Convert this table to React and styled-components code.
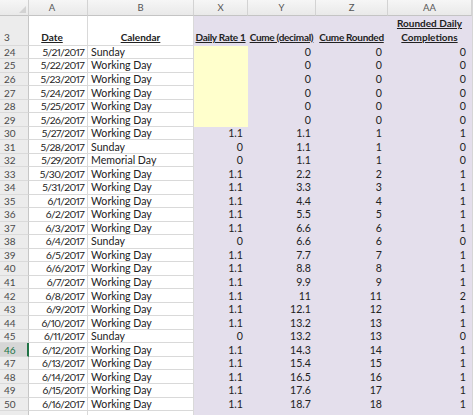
import React from 'react';
import styled, { createGlobalStyle } from 'styled-components';

const GlobalStyle = createGlobalStyle`
    html, body {
        margin: 0;
        padding: 0;
        background: #ffffff;
        overflow: hidden;
    }
    #root {
        width: 474px;
        height: 415px;
        overflow: hidden;
    }
`;

const colors = {
    white: '#ffffff',
    lavender: '#e4dfec',
    yellow: '#ffffcc',
    grid: '#d9d9d9',
    text: '#222222'
};

const columns = ['A', 'B', 'X', 'Y', 'Z', 'AA'];

// row, date, calendar, daily rate, cume decimal, cume rounded, rounded daily
const rows = [
    [24, '5/21/2017', 'Sunday', null, '0', '0', '0'],
    [25, '5/22/2017', 'Working Day', null, '0', '0', '0'],
    [26, '5/23/2017', 'Working Day', null, '0', '0', '0'],
    [27, '5/24/2017', 'Working Day', null, '0', '0', '0'],
    [28, '5/25/2017', 'Working Day', null, '0', '0', '0'],
    [29, '5/26/2017', 'Working Day', null, '0', '0', '0'],
    [30, '5/27/2017', 'Working Day', '1.1', '1.1', '1', '1'],
    [31, '5/28/2017', 'Sunday', '0', '1.1', '1', '0'],
    [32, '5/29/2017', 'Memorial Day', '0', '1.1', '1', '0'],
    [33, '5/30/2017', 'Working Day', '1.1', '2.2', '2', '1'],
    [34, '5/31/2017', 'Working Day', '1.1', '3.3', '3', '1'],
    [35, '6/1/2017', 'Working Day', '1.1', '4.4', '4', '1'],
    [36, '6/2/2017', 'Working Day', '1.1', '5.5', '5', '1'],
    [37, '6/3/2017', 'Working Day', '1.1', '6.6', '6', '1'],
    [38, '6/4/2017', 'Sunday', '0', '6.6', '6', '0'],
    [39, '6/5/2017', 'Working Day', '1.1', '7.7', '7', '1'],
    [40, '6/6/2017', 'Working Day', '1.1', '8.8', '8', '1'],
    [41, '6/7/2017', 'Working Day', '1.1', '9.9', '9', '1'],
    [42, '6/8/2017', 'Working Day', '1.1', '11', '11', '2'],
    [43, '6/9/2017', 'Working Day', '1.1', '12.1', '12', '1'],
    [44, '6/10/2017', 'Working Day', '1.1', '13.2', '13', '1'],
    [45, '6/11/2017', 'Sunday', '0', '13.2', '13', '0'],
    [46, '6/12/2017', 'Working Day', '1.1', '14.3', '14', '1'],
    [47, '6/13/2017', 'Working Day', '1.1', '15.4', '15', '1'],
    [48, '6/14/2017', 'Working Day', '1.1', '16.5', '16', '1'],
    [49, '6/15/2017', 'Working Day', '1.1', '17.6', '17', '1'],
    [50, '6/16/2017', 'Working Day', '1.1', '18.7', '18', '1'],
    [51, '', '', '', '', '', '']
];

const Sheet = styled.div`
    display: grid;
    grid-template-columns: 29px 59px 106px 54px 68px 72px 84px 2px;
    grid-template-rows: 15.5px 30.2px repeat(28, 13.54px);
    font-family: Lato, "Open Sans", sans-serif;
    font-size: 10.6px;
    color: ${colors.text};
`;

const Corner = styled.div`
    position: relative;
    background: linear-gradient(#f6f6f6, #e9e9e9);
    border-right: 1px solid #cfcfcf;
    border-bottom: 1px solid #c4c4c4;
    box-sizing: border-box;

    &::after {
        content: '';
        position: absolute;
        right: 2px;
        bottom: 2px;
        width: 0;
        height: 0;
        border-left: 7px solid transparent;
        border-bottom: 7px solid #d2d2d2;
    }
`;

const ColLetter = styled.div`
    display: flex;
    align-items: center;
    justify-content: center;
    background: linear-gradient(#f6f6f6, #e9e9e9);
    border-right: 1px solid #d3d3d3;
    border-bottom: 1px solid #c4c4c4;
    box-sizing: border-box;
    color: #555555;
    font-size: 9.5px;
    padding-right: ${props => props.$shift || 0}px;
`;

const RightEdge = styled.div`
    background: #ffffff;
    border-left: 1px solid #d6d6d6;
    box-sizing: border-box;
`;

const RowNum = styled.div`
    display: flex;
    align-items: ${props => props.$bottom ? 'flex-end' : 'center'};
    padding-left: 4px;
    padding-bottom: ${props => props.$bottom ? '2px' : '0'};
    background: ${props => props.$selected ? '#d6d6d6' : '#ececec'};
    color: ${props => props.$selected ? '#217346' : '#4a4a4a'};
    border-bottom: 1px solid #dadada;
    border-right: ${props => props.$selected ? '2px solid #217346' : '1px solid #c6c6c6'};
    box-sizing: border-box;
    font-size: 10px;
`;

const Cell = styled.div`
    display: flex;
    align-items: center;
    justify-content: ${props => props.$align === 'left' ? 'flex-start' : 'flex-end'};
    padding: 0 ${props => props.$pad || 3}px 0 3px;
    background: ${props => colors[props.$fill]};
    border-right: 1px solid ${props => props.$fill === 'white' ? colors.grid : colors[props.$fill]};
    border-bottom: 1px solid ${props => props.$fill === 'white' ? colors.grid : colors[props.$fill]};
    box-sizing: border-box;
    white-space: nowrap;
    overflow: hidden;
`;

const DateCell = styled(Cell)`
    font-size: 10.3px;
    letter-spacing: -0.6px;
    font-variant-numeric: proportional-nums;
`;

const HeadCell = styled.div`
    display: flex;
    align-items: flex-end;
    justify-content: center;
    padding: 0 ${props => props.$shift || 0}px 1px 0;
    background: ${props => colors[props.$fill]};
    border-right: 1px solid ${props => props.$fill === 'white' ? colors.grid : colors[props.$fill]};
    border-bottom: 1px solid ${props => props.$fill === 'white' ? colors.grid : colors[props.$fill]};
    box-sizing: border-box;
`;

const HeadLabel = styled.span`
    font-weight: bold;
    text-decoration: underline;
    text-align: center;
    line-height: 14px;
    font-size: 10px;
    white-space: pre;
    letter-spacing: ${props => props.$tight ? '-0.3px' : '0'};
`;

function HeaderRow() {
    return (
        <>
            <RowNum $bottom>3</RowNum>
            <HeadCell $fill="white" $shift={12}><HeadLabel>Date</HeadLabel></HeadCell>
            <HeadCell $fill="white"><HeadLabel>Calendar</HeadLabel></HeadCell>
            <HeadCell $fill="lavender"><HeadLabel $tight>Daily Rate 1</HeadLabel></HeadCell>
            <HeadCell $fill="lavender"><HeadLabel $tight>Cume (decimal)</HeadLabel></HeadCell>
            <HeadCell $fill="lavender"><HeadLabel $tight>Cume Rounded</HeadLabel></HeadCell>
            <HeadCell $fill="lavender"><HeadLabel>{'Rounded Daily\nCompletions'}</HeadLabel></HeadCell>
            <RightEdge />
        </>
    );
}

function DataRow({ row }) {
    const [num, date, calendar, rate, cume, rounded, daily] = row;
    return (
        <>
            <RowNum $selected={num === 46}>{date ? num : ''}</RowNum>
            <DateCell $fill="white">{date}</DateCell>
            <Cell $fill="white" $align="left">{calendar}</Cell>
            <Cell $fill={rate === null ? 'yellow' : 'lavender'} $pad={4}>{rate}</Cell>
            <Cell $fill="lavender" $pad={4}>{cume}</Cell>
            <Cell $fill="lavender" $pad={5}>{rounded}</Cell>
            <Cell $fill="lavender" $pad={5}>{daily}</Cell>
            <RightEdge />
        </>
    );
}

export default function App() {
    return (
        <>
            <GlobalStyle />
            <Sheet>
                <Corner />
                {columns.map(col => (
                    <ColLetter key={col} $shift={col === 'A' ? 12 : 0}>{col}</ColLetter>
                ))}
                <RightEdge />
                <HeaderRow />
                {rows.map(row => <DataRow key={row[0]} row={row} />)}
            </Sheet>
        </>
    );
}
